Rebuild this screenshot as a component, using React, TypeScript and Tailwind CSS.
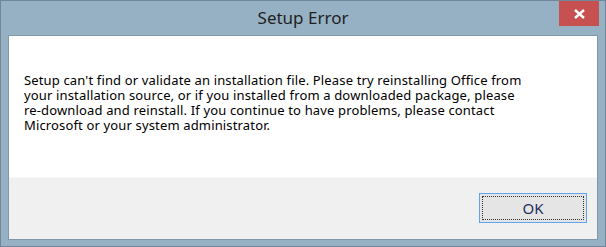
export default function App() {
  return (
    <div className="flex h-[247px] w-[606px] flex-col border border-[#6f8799] bg-[#97b1c4] font-['Noto_Sans',sans-serif]">
      <div className="relative flex h-[34px] shrink-0 items-center justify-center">
        <span className="pb-[1px] text-[17px] text-[#1f1f1f]">Setup Error</span>
        <button
          type="button"
          className="absolute right-[6px] top-0 flex h-[25px] w-[40px] items-center justify-center bg-[#c75050]"
        >
          <svg width="11" height="10" viewBox="0 0 11 10">
            <path d="M1 1 L10 9 M10 1 L1 9" stroke="#fff" strokeWidth="2.4" />
          </svg>
        </button>
      </div>
      <div className="mx-[7px] mb-[6px] flex flex-1 flex-col border border-[#7f98ab]">
        <main className="h-[141px] bg-white pl-[15px] pt-[37px] text-[13px] leading-[15px] tracking-[0.15px] text-black">
          Setup can&apos;t find or validate an installation file. Please try reinstalling Office from
          <br />
          your installation source, or if you installed from a downloaded package, please
          <br />
          re-download and reinstall. If you continue to have problems, please contact
          <br />
          Microsoft or your system administrator.
        </main>
        <footer className="flex flex-1 items-start justify-end border-t border-[#f7f7f7] bg-[#f0f0f0] pr-[10px] pt-[15px]">
          <button
            type="button"
            className="h-[30px] w-[108px] border border-[#5fa3e8] bg-[#e5e5e5] p-[2px]"
          >
            <span className="flex h-full w-full items-center justify-center border border-dotted border-[#333] text-[15px] text-[#1f2f5f]">
              OK
            </span>
          </button>
        </footer>
      </div>
    </div>
  );
}
